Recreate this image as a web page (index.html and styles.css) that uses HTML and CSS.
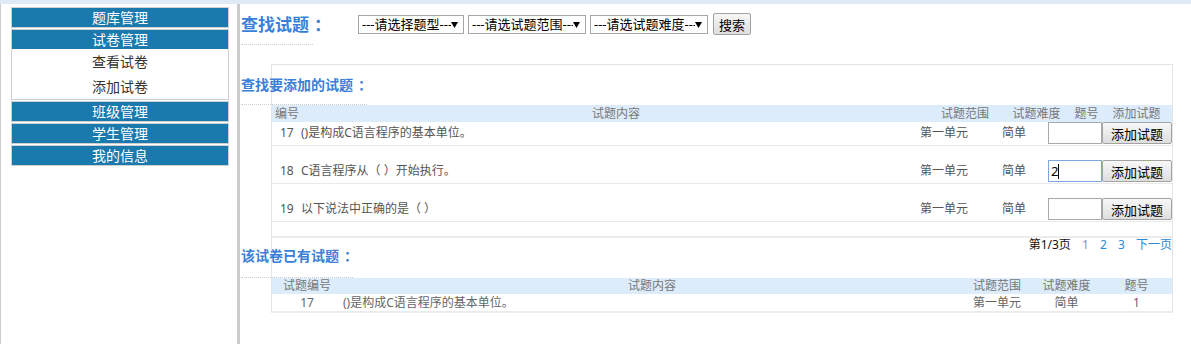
FILE: index.html
```html
<!DOCTYPE html>
<html lang="zh-CN">
<head>
    <meta charset="UTF-8">
    <meta name="viewport" content="width=device-width, initial-scale=1.0">
    <title>添加试卷</title>
    <link rel="stylesheet" href="styles.css">
</head>
<body>
    <div class="topbar"></div>
    <div class="page">
        <aside class="sidebar">
            <div class="menu-box"><div class="menu-title">题库管理</div></div>
            <div class="menu-box">
                <div class="menu-title">试卷管理</div>
                <a class="menu-item" href="#">查看试卷</a>
                <a class="menu-item" href="#">添加试卷</a>
            </div>
            <div class="menu-box"><div class="menu-title">班级管理</div></div>
            <div class="menu-box"><div class="menu-title">学生管理</div></div>
            <div class="menu-box"><div class="menu-title">我的信息</div></div>
        </aside>

        <main class="main">
            <div class="search">
                <h2 class="search-title">查找试题<span class="colon">：</span></h2>
                <form class="search-form">
                    <select class="pick pick-type"><option>---请选择题型---</option></select>
                    <select class="pick"><option>---请选试题范围---</option></select>
                    <select class="pick"><option>---请选试题难度---</option></select>
                    <button type="submit" class="btn btn-search">搜索</button>
                </form>
            </div>

            <div class="panel">
                <h3 class="sub-title">查找要添加的试题<span class="colon">：</span></h3>
                <div class="q-head">
                    <span class="h-id">编号</span>
                    <span>试题内容</span>
                    <span>试题范围</span>
                    <span>试题难度</span>
                    <span>题号</span>
                    <span>添加试题</span>
                </div>
                <form class="q-row">
                    <span class="q-id">17</span>
                    <span>()是构成C语言程序的基本单位。</span>
                    <span>第一单元</span>
                    <span>简单</span>
                    <input type="text" class="num-input">
                    <button type="submit" class="btn btn-add">添加试题</button>
                </form>
                <form class="q-row tall">
                    <span class="q-id">18</span>
                    <span>C语言程序从（ ）开始执行。</span>
                    <span>第一单元</span>
                    <span>简单</span>
                    <span class="caret-wrap"><input type="text" class="num-input focused" value="2"></span>
                    <button type="submit" class="btn btn-add">添加试题</button>
                </form>
                <form class="q-row tall">
                    <span class="q-id">19</span>
                    <span>以下说法中正确的是（ ）</span>
                    <span>第一单元</span>
                    <span>简单</span>
                    <input type="text" class="num-input">
                    <button type="submit" class="btn btn-add">添加试题</button>
                </form>

                <div class="pager">
                    第1/3页
                    <a href="#" class="visited">1</a>
                    <a href="#">2</a>
                    <a href="#">3</a>
                    <a href="#">下一页</a>
                </div>

                <h3 class="sub-title second">该试卷已有试题<span class="colon">：</span></h3>
                <table class="owned">
                    <tr>
                        <th class="c-id">试题编号</th>
                        <th class="c-text">试题内容</th>
                        <th class="c-range">试题范围</th>
                        <th class="c-level">试题难度</th>
                        <th class="c-no">题号</th>
                    </tr>
                    <tr>
                        <td>17</td>
                        <td class="left">()是构成C语言程序的基本单位。</td>
                        <td>第一单元</td>
                        <td>简单</td>
                        <td>1</td>
                    </tr>
                </table>
            </div>
        </main>
    </div>
</body>
</html>
```

FILE: styles.css
```css
body {
  margin: 0;
  font-family: "Noto Sans", "Noto Sans CJK SC", sans-serif;
  font-size: 12px;
  color: #555;
  background: #fff;
}

.topbar {
  height: 4px;
  background: #dfeaf6;
}

.page {
  display: flex;
  min-height: 340px;
}

/* left menu */
.sidebar {
  width: 226px;
  padding: 3px 0 0 10px;
  border-left: 1px solid #ccc;
  border-right: 3px solid #ccc;
}

.menu-box {
  width: 216px;
  border: 1px solid #d0d0d0;
  margin-bottom: 1px;
}

.menu-title {
  height: 19px;
  line-height: 19px;
  background: #1a79ad;
  color: #fff;
  font-size: 14px;
  text-align: center;
}

.menu-item {
  display: block;
  height: 25px;
  line-height: 25px;
  text-align: center;
  font-size: 14px;
  color: #333;
  text-decoration: none;
}

/* main area */
.main {
  flex: 1;
  padding: 10px 18px 0 1px;
}

.search {
  display: flex;
  align-items: flex-start;
}

.search-title {
  margin: 0;
  width: 72px;
  white-space: nowrap;
  font-size: 17px;
  line-height: 22px;
  color: #3a80d8;
  padding-bottom: 8px;
  border-bottom: 1px dotted #ccc;
}

/* full-width colon sits centred in the original font */
.colon {
  padding-left: 5px;
  margin-right: -5px;
}

.search-form {
  display: flex;
  gap: 4px;
  margin: 0 0 0 45px;
}

.pick {
  appearance: none;
  -webkit-appearance: none;
  width: 118px;
  height: 19px;
  margin-top: 1px;
  padding: 0 12px 0 3px;
  border: 1px solid #a6a6a6;
  border-radius: 0;
  font-family: inherit;
  font-size: 13px;
  line-height: 17px;
  color: #000;
  background: #fff url("data:image/svg+xml;utf8,<svg xmlns='http://www.w3.org/2000/svg' width='7' height='6'><path d='M0 0h7L3.5 6z' fill='%23000'/></svg>") no-repeat right 5px center;
}

.pick-type {
  width: 106px;
}

.btn {
  font-family: inherit;
  font-size: 13px;
  color: #000;
  border: 1px solid #a3a3a3;
  border-radius: 2px;
  background: linear-gradient(#f7f7f7, #dedede);
  padding: 0;
  cursor: pointer;
}

.btn-search {
  width: 38px;
  height: 22px;
  margin: -1px 0 0 1px;
}

.panel {
  margin: 19px 0 0 30px;
  border: 1px solid #e4e4e4;
  border-bottom: 2px solid #ececec;
}

.sub-title {
  width: fit-content;
  white-space: nowrap;
  margin: 10px 0 0 -31px;
  padding-bottom: 9px;
  border-bottom: 1px dotted #ccc;
  font-size: 14px;
  line-height: 20px;
  color: #3a80d8;
}

.sub-title.second {
  margin-top: -5px;
  padding-bottom: 11px;
}

/* question list */
.q-head {
  display: grid;
  grid-template-columns: 40px 608px 90px 53px 47px 53px;
  height: 17px;
  line-height: 17px;
  background: #ddecfb;
  color: #777;
  text-align: center;
}

.q-head .h-id {
  text-align: left;
  padding-left: 3px;
}

.q-row {
  display: grid;
  grid-template-columns: 29px 619px 82px 46px 54px 70px;
  align-items: center;
  margin: 0;
  padding-bottom: 1px;
  border-bottom: 1px solid #eaeaea;
  line-height: 16px;
}

.q-row.tall {
  padding-top: 14px;
}

.q-id {
  padding-left: 8px;
}

.num-input {
  box-sizing: border-box;
  width: 54px;
  height: 22px;
  margin: 0;
  padding: 0 2px;
  border: 1px solid #a9a9a9;
  font-family: inherit;
  font-size: 13px;
  color: #000;
  outline: none;
}

.num-input.focused {
  border-color: #7ea6e0;
}

.caret-wrap {
  position: relative;
  display: block;
  height: 22px;
}

.caret-wrap::after {
  content: "";
  position: absolute;
  left: 10px;
  top: 4px;
  width: 1px;
  height: 15px;
  background: #000;
}

.btn-add {
  width: 70px;
  height: 22px;
}

.pager {
  margin-top: 14px;
  border-top: 2px solid #ececec;
  text-align: right;
  line-height: 13px;
  color: #111;
}

.pager a {
  margin-left: 8px;
  color: #2b8ad6;
  text-decoration: none;
}

.pager a.visited {
  color: #9287c2;
}

/* owned questions */
.owned {
  width: 100%;
  border-collapse: collapse;
  table-layout: fixed;
}

.owned th {
  height: 16px;
  padding: 0;
  background: #ddecfb;
  font-weight: normal;
  color: #777;
  line-height: 16px;
}

.owned td {
  height: 17px;
  padding: 0;
  text-align: center;
  color: #666;
  line-height: 17px;
}

.owned td.left {
  text-align: left;
  padding-left: 1px;
}

.c-id { width: 70px; }
.c-text { width: 620px; }
.c-range { width: 70px; }
.c-level { width: 69px; }
.c-no { width: 71px; }
```
